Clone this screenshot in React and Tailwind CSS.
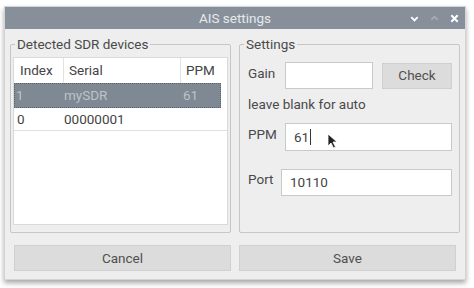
import React from "react";

const Field = ({ value, cursor, className }) => (
  <div
    className={`h-[27px] bg-white border border-[#c9c9c9] flex items-center px-[8px] text-[13.5px] text-[#444] ${className}`}
  >
    {value}
    {cursor && <span className="w-px h-[16px] bg-[#333] ml-[1px]" />}
  </div>
);

const App = () => {
  return (
    <div
      className="w-[474px] h-[288px] bg-white pt-[6px] pl-[4px]"
      style={{ fontFamily: "Roboto, 'Noto Sans', sans-serif" }}
    >
      <div className="w-[462px] h-[274px] bg-[#eeeeee] border border-[#d4d4d4] shadow-[0_3px_5px_rgba(0,0,0,0.35)] flex flex-col">
        {/* title bar */}
        <div className="h-[22px] bg-[#87909a] relative flex items-center justify-center">
          <span className="text-[13.5px] text-[#e6e9ec]">AIS settings</span>
          <div className="absolute right-[5px] top-0 h-full flex items-center gap-[9px]">
            <svg width="11" height="11" viewBox="0 0 12 12">
              <path d="M2.5 4.5 L6 8 L9.5 4.5" stroke="#ffffff" strokeWidth="2" fill="none" />
            </svg>
            <svg width="11" height="11" viewBox="0 0 12 12">
              <path d="M2.5 7.5 L6 4 L9.5 7.5" stroke="#a3abb3" strokeWidth="2" fill="none" />
            </svg>
            <svg width="11" height="11" viewBox="0 0 12 12">
              <path d="M2.5 2.5 L9.5 9.5 M9.5 2.5 L2.5 9.5" stroke="#ffffff" strokeWidth="2.2" fill="none" />
            </svg>
          </div>
        </div>

        <div className="flex gap-[8px] px-[5px] pt-[15px]">
          {/* left group */}
          <div className="relative w-[222px] h-[189px] border border-[#c6c6c6] rounded-[2px]">
            <span className="absolute -top-[10px] left-[4px] bg-[#eeeeee] px-[2px] text-[13.5px] leading-[18px] text-[#4a4a4a]">
              Detected SDR devices
            </span>
            <div className="mt-[12px] mx-[2px] h-[168px] bg-white border border-[#dadada] flex flex-col text-[13.5px] text-[#444]">
              <div className="flex h-[25px] items-center">
                <div className="w-[50px] pl-[6px] h-full flex items-center border-r border-[#e2e2e2]">Index</div>
                <div className="w-[117px] pl-[5px] h-full flex items-center border-r border-[#e2e2e2]">Serial</div>
                <div className="pl-[5px]">PPM</div>
              </div>
              <div className="flex h-[25px] items-center bg-[#7e8993] text-[#bcc3c9] mr-[6px] outline outline-1 outline-dotted outline-[#5d6670] -outline-offset-1">
                <div className="w-[50px] pl-[2px]">1</div>
                <div className="w-[117px] pl-[0px]">mySDR</div>
                <div className="pl-[2px]">61</div>
              </div>
              <div className="flex h-[23px] items-center border-b border-[#e0e0e0]">
                <div className="w-[50px] pl-[3px]">0</div>
                <div className="w-[117px]">00000001</div>
                <div></div>
              </div>
            </div>
          </div>

          {/* right group */}
          <div className="relative w-[222px] h-[189px] border border-[#c6c6c6] rounded-[2px] text-[13.5px] text-[#4a4a4a]">
            <span className="absolute -top-[10px] left-[4px] bg-[#eeeeee] px-[2px] leading-[18px]">Settings</span>
            <div className="flex items-center mt-[17px] pl-[8px]">
              <span className="w-[37px] -mt-[4px]">Gain</span>
              <Field value="" className="w-[88px]" />
              <div className="ml-[9px] w-[70px] h-[26px] bg-[#dcdcdc] border border-[#cfcfcf] flex items-center justify-center text-[#505050]">
                Check
              </div>
            </div>
            <div className="pl-[8px] mt-[5px] leading-[20px]">leave blank for auto</div>
            <div className="flex items-center mt-[9px] pl-[8px]">
              <span className="w-[37px] -mt-[6px]">PPM</span>
              <div className="relative">
                <Field value="61" cursor className="w-[167px] h-[28px]" />
                <svg className="absolute left-[42px] top-[10px]" width="12" height="16" viewBox="0 0 12 16">
                  <path d="M1 1 L1 13 L4 10 L6.5 15 L8.5 14 L6 9 L10 9 Z" fill="#222" stroke="#fff" strokeWidth="0.8" />
                </svg>
              </div>
            </div>
            <div className="flex items-center mt-[18px] pl-[8px]">
              <span className="w-[33px] -mt-[6px]">Port</span>
              <Field value="10110" className="w-[171px]" />
            </div>
          </div>
        </div>

        {/* buttons */}
        <div className="flex gap-[8px] px-[9px] mt-[12px]">
          <div className="w-[218px] h-[26px] bg-[#dcdcdc] border border-[#d0d0d0] flex items-center justify-center text-[13.5px] text-[#505050]">
            Cancel
          </div>
          <div className="w-[218px] h-[26px] bg-[#dcdcdc] border border-[#d0d0d0] flex items-center justify-center text-[13.5px] text-[#505050]">
            Save
          </div>
        </div>
      </div>
    </div>
  );
};

export default App;
